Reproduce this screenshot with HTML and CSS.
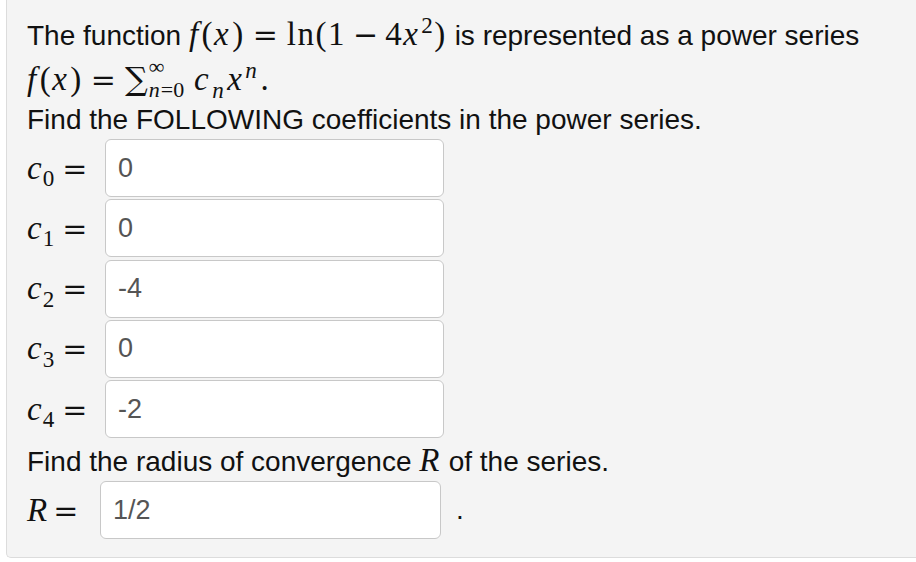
FILE: index.html
```html
<!DOCTYPE html>
<html>
<head>
<meta charset="utf-8">
<link rel="stylesheet" href="styles.css">
</head>
<body>
<div class="panel">
  <div class="text l1">The function <span class="m"><i>f</i>(<i>x</i>)<span class="op">=</span>ln(1<span class="op bin">−</span>4<i>x</i><sup>2</sup>)</span> is represented as a power series</div>
  <div class="text l2"><span class="m"><i>f</i>(<i>x</i>)<span class="op">=</span><span class="sum">∑</span><span class="lim"><span class="up">∞</span><span class="dn"><i>n</i>=0</span></span> <i>c</i><sub><i>n</i></sub><i>x</i><sup><i>n</i></sup>.</span></div>
  <div class="text l3">Find the FOLLOWING coefficients in the power series.</div>
  <div class="rows">
    <div class="row"><span class="lab m"><i>c</i><sub>0</sub><span class="op">=</span></span><input class="box" type="text" value="0" readonly></div>
    <div class="row"><span class="lab m"><i>c</i><sub>1</sub><span class="op">=</span></span><input class="box" type="text" value="0" readonly></div>
    <div class="row"><span class="lab m"><i>c</i><sub>2</sub><span class="op">=</span></span><input class="box" type="text" value="-4" readonly></div>
    <div class="row"><span class="lab m"><i>c</i><sub>3</sub><span class="op">=</span></span><input class="box" type="text" value="0" readonly></div>
    <div class="row"><span class="lab m"><i>c</i><sub>4</sub><span class="op">=</span></span><input class="box" type="text" value="-2" readonly></div>
  </div>
  <div class="text l4">Find the radius of convergence <span class="m"><i>R</i></span> of the series.</div>
  <div class="row rrow"><span class="lab rlab m"><i>R</i><span class="op">=</span></span><input class="box rbox" type="text" value="1/2" readonly><span class="dot">.</span></div>
</div>
</body>
</html>
```

FILE: styles.css
```css
html, body {
  margin: 0;
  padding: 0;
  background: #ffffff;
}
body {
  width: 916px;
  height: 562px;
  overflow: hidden;
}
.panel {
  margin-left: 6px;
  width: 930px;
  height: 558px;
  box-sizing: border-box;
  background: #f4f4f4;
  border-left: 1px solid #dcdcdc;
  border-bottom: 1px solid #dcdcdc;
  border-bottom-left-radius: 5px;
  padding: 17px 0 0 20px;
  font-family: "Liberation Sans", Arial, sans-serif;
  font-size: 28px;
  color: #111;
}
.text {
  line-height: 38px;
  height: 38px;
  white-space: nowrap;
}
.l2 {
  height: 46px;
}
.m {
  font-family: "Liberation Serif", "Times New Roman", serif;
  font-size: 33px;
  line-height: 1;
  letter-spacing: 1.5px;
}
.m i {
  font-style: italic;
}
.l1 .m i, .l2 .m i {
  padding-right: 2px;
}
.m sup, .m sub {
  font-size: 0.7em;
  line-height: 0;
}
.op {
  font-family: "DejaVu Serif", serif;
  font-size: 30px;
  margin: 0 9px 0 8px;
  letter-spacing: 0;
}
.op.bin {
  margin: 0 7px;
}
.sum {
  font-family: "DejaVu Serif", serif;
  font-size: 32px;
  letter-spacing: 0;
}
.lim {
  display: inline-flex;
  flex-direction: column;
  vertical-align: 16px;
  font-size: 22px;
  line-height: 23px;
  margin-left: 1px;
  letter-spacing: 0;
}
.lim .dn i {
  padding-right: 1px;
}
.rows {
  display: flex;
  flex-direction: column;
  gap: 2.25px;
}
.row {
  display: flex;
  align-items: center;
  height: 58px;
}
.lab {
  width: 78px;
  flex: none;
  white-space: nowrap;
  letter-spacing: 0;
}
.lab sub {
  margin-left: 1px;
}
.box {
  width: 339px;
  height: 58px;
  box-sizing: border-box;
  border: 1px solid #c8c8c8;
  border-radius: 6px;
  background: #fff;
  padding: 0 12px;
  font-family: "Liberation Sans", Arial, sans-serif;
  font-size: 27px;
  color: #555;
  outline: none;
  margin: 0;
}
.l4 {
  margin-top: 5px;
}
.rlab {
  width: 73px;
}
.rlab .op {
  margin-left: 6px;
}
.rbox {
  width: 341px;
}
.dot {
  margin-left: 15px;
}
```
